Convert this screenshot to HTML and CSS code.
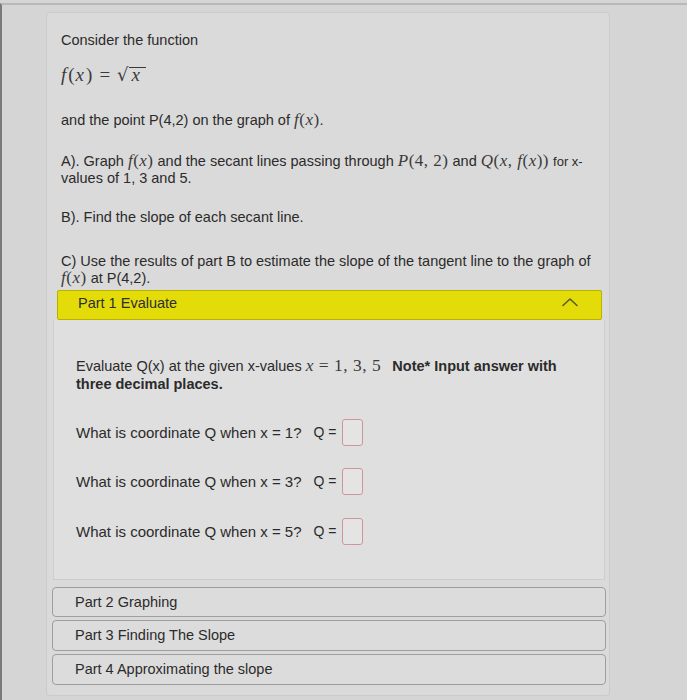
FILE: index.html
```html
<!DOCTYPE html>
<html>
<head>
<meta charset="utf-8">
<link rel="stylesheet" href="styles.css">
</head>
<body>
<div class="screen">
  <div class="card">
    <div class="intro">
      <p class="p-consider">Consider the function</p>
      <p class="p-formula"><span class="mi">f</span><span class="mo">(</span><span class="mi">x</span><span class="mo">)</span><span class="eq">=</span><span class="sqrt">√</span><span class="rad"><span class="mi">x</span></span></p>
      <p class="p-point">and the point P(4,2) on the graph of <span class="math"><span class="mi">f</span>(<span class="mi">x</span>)</span>.</p>
      <p class="p-a">A). Graph <span class="math"><span class="mi">f</span>(<span class="mi">x</span>)</span> and the secant lines passing through <span class="math"><span class="mi">P</span>(4, 2)</span> and <span class="math"><span class="mi">Q</span>(<span class="mi">x</span>, <span class="mi">f</span>(<span class="mi">x</span>))</span> <span class="small">for x-</span><br>values of 1, 3 and 5.</p>
      <p class="p-b">B). Find the slope of each secant line.</p>
      <p class="p-c">C) Use the results of part B to estimate the slope of the tangent line to the graph of<br><span class="math"><span class="mi">f</span>(<span class="mi">x</span>)</span> at P(4,2).</p>
    </div>

    <div class="part-open">
      <span>Part 1 Evaluate</span>
      <svg class="chev" width="18" height="10" viewBox="0 0 18 10"><path d="M2 8.5 L9 2 L16 8.5" fill="none" stroke="#5a5a2a" stroke-width="1.6" stroke-linecap="round" stroke-linejoin="round"/></svg>
    </div>

    <div class="panel">
      <p class="evaluate">Evaluate Q(x) at the given x-values <span class="math big"><span class="mi">x</span> = 1, 3, 5</span><b class="note">Note* Input answer with<br>three decimal places.</b></p>
      <div class="qrow r1"><span>What is coordinate Q when x = 1?</span><span class="qlab">Q =</span><span class="box"></span></div>
      <div class="qrow r2"><span>What is coordinate Q when x = 3?</span><span class="qlab">Q =</span><span class="box"></span></div>
      <div class="qrow r3"><span>What is coordinate Q when x = 5?</span><span class="qlab">Q =</span><span class="box"></span></div>
    </div>

    <div class="part p2">Part 2 Graphing</div>
    <div class="part p3">Part 3 Finding The Slope</div>
    <div class="part p4">Part 4 Approximating the slope</div>
  </div>
</div>
</body>
</html>
```

FILE: styles.css
```css
html, body {
  margin: 0;
  padding: 0;
}
body {
  background: #d5d5d5;
  font-family: "Liberation Sans", Arial, sans-serif;
  color: #2b2b2b;
  width: 687px;
  height: 700px;
  overflow: hidden;
}
.screen {
  height: 700px;
  border-left: 2px solid #7a7a7a;
  border-top: 2px solid #b8b8b8;
  margin-top: 3px;
  box-sizing: border-box;
  padding-left: 44px;
  padding-top: 7px;
}
.card {
  width: 564px;
  background: #dadada;
  border: 1px solid #cbcbcb;
  border-radius: 4px;
  padding: 19px 0 10px 0;
  box-sizing: border-box;
  font-size: 14.5px;
  line-height: 17px;
}
.intro {
  padding-left: 14px;
}
p { margin: 0; }
.p-formula { margin-top: 18px; line-height: 18px; height: 18px; color: #3a3a3a; }
.p-point { margin-top: 27px; }
.p-a { margin-top: 24px; }
.p-b { margin-top: 22px; }
.p-c { margin-top: 27px; }

.math {
  font-family: "Liberation Serif", "DejaVu Serif", serif;
  font-size: 17px;
  line-height: 0;
  letter-spacing: 0.5px;
  color: #3a3a3a;
}
.mi {
  font-family: "Liberation Serif", "DejaVu Serif", serif;
  font-style: italic;
}
.p-formula .mi, .p-formula .mo {
  font-family: "Liberation Serif", serif;
  font-size: 19px;
  line-height: 0;
  letter-spacing: 1px;
}
.p-formula .mi { margin-right: 1px; }
.eq {
  font-family: "Liberation Serif", serif;
  font-size: 19px;
  line-height: 0;
  margin: 0 7px 0 6px;
}
.sqrt {
  font-family: "DejaVu Sans", sans-serif;
  font-size: 18px;
  line-height: 0;
}
.rad {
  border-top: 1px solid #3a3a3a;
  padding: 0 4px 0 3px;
  line-height: 0;
}
.small { font-size: 13px; }

.part-open {
  margin: 3px 7px 0 10px;
  height: 30px;
  background: #e4dc08;
  border: 1px solid #b9b000;
  border-radius: 2px;
  box-sizing: border-box;
  display: flex;
  align-items: center;
  justify-content: space-between;
  padding: 0 22px 3px 20px;
  color: #2e2e2e;
}
.chev { margin-top: -3px; }

.panel {
  margin: 0 4px 0 6px;
  background: #dfdfdf;
  border: 1px solid #cdcdcd;
  border-top: none;
  padding: 37px 0 34px 22px;
  box-sizing: border-box;
  height: 260px;
  font-size: 15px;
}
.evaluate { line-height: 18px; font-size: 14.5px; }
.big { font-size: 17.5px; }
.note { margin-left: 11px; font-weight: bold; }
.qrow {
  display: flex;
  align-items: center;
  height: 28px;
}
.r1 { margin-top: 25px; }
.r2 { margin-top: 21px; }
.r3 { margin-top: 22px; }
.qlab { margin-left: 12px; margin-right: 5px; font-size: 14px; }
.box {
  width: 19px;
  height: 25px;
  border: 1.5px solid #cf959b;
  border-radius: 3px;
  background: #e4e4e4;
}

.part {
  margin: 0 3px 0 5px;
  height: 31px;
  border: 1.5px solid #9e9e9e;
  border-radius: 4px;
  background: #dcdcdc;
  box-sizing: border-box;
  display: flex;
  align-items: center;
  padding-left: 22px;
  color: #2b2b2b;
}
.p2 { margin-top: 7px; height: 30px; }
.p3 { margin-top: 3px; }
.p4 { margin-top: 3px; }
```
